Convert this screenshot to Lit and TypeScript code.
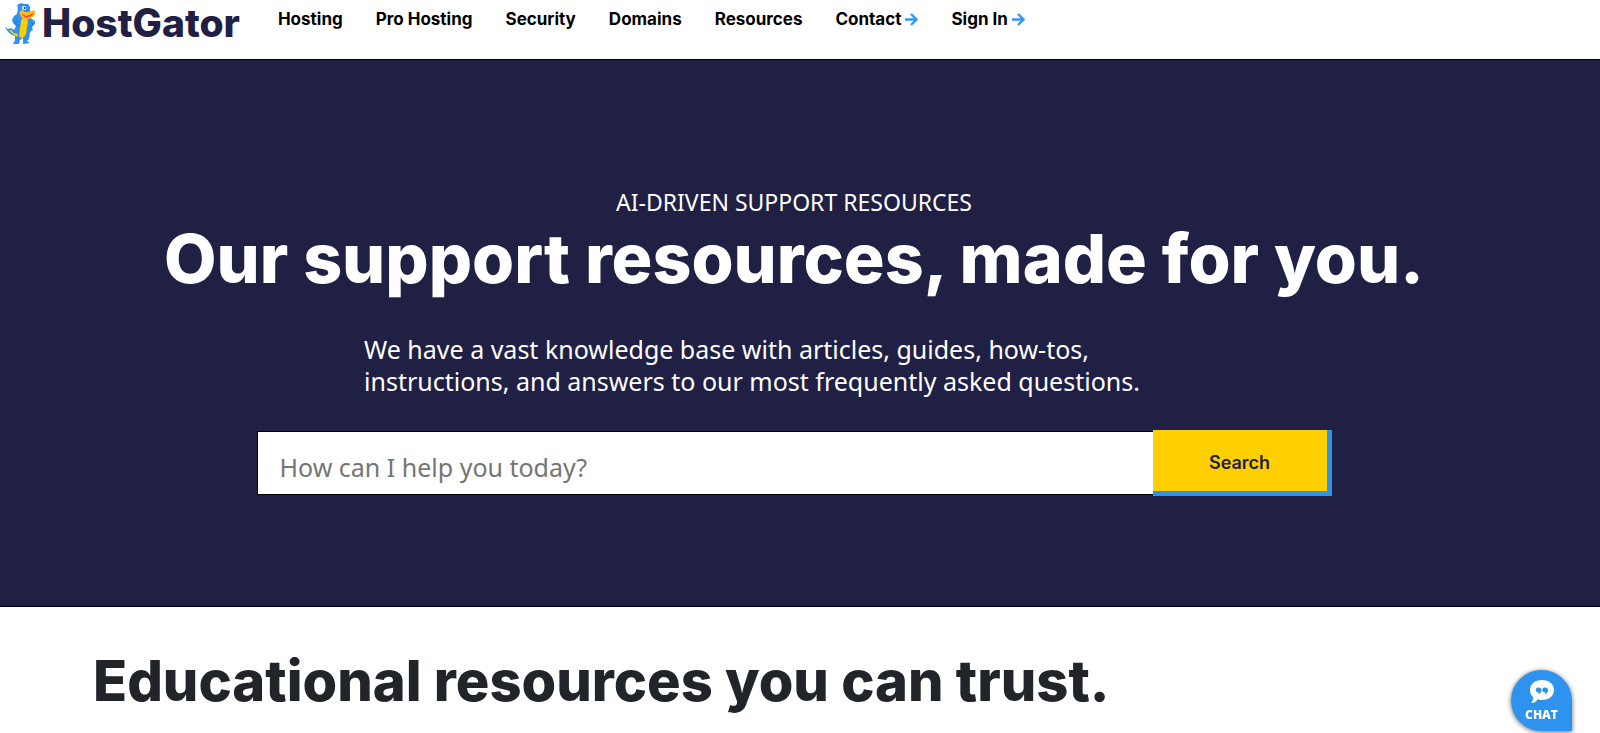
import { LitElement, html, css, svg, nothing } from "lit";
import { customElement } from "lit/decorators.js";

interface NavItem {
  label: string;
  arrow?: boolean;
}

const NAV: NavItem[] = [
  { label: "Hosting" },
  { label: "Pro Hosting" },
  { label: "Security" },
  { label: "Domains" },
  { label: "Resources" },
  { label: "Contact", arrow: true },
  { label: "Sign In", arrow: true },
];

const gator = svg`
  <path fill="#2e93ee" d="M0 24L3 26L6 25L9 27L11 23L8 20L7 17L9 13L12 11L13 5L12 2L16 0L19 1L23 1L25 4L25 8L24 14L27 16L30 18L30 21L27 24L28 27L25 29L24 36L22 38L25 40L18 41L18 35L15 37L14 41L8 41L10 37L10 33L7 32Q3 30 0 24Z"/>
  <path fill="#ffcf00" d="M17 15L22 16L23 19L22 24L21 31L19 34L16 35L14 33L15 25L16 19Z"/>
  <path fill="#ffcf00" d="M4 27L6 27L9 30L13 31L12 34L8 31Q6 30 4 27Z"/>
  <path fill="#ffb91a" d="M14 9L17 7L20 9L24 9L29 7L31 10L28 14L22 17L16 14Z"/>
  <path fill="#f0522d" d="M17 11L21 13L29 10L27 13L22 15L18 13Z"/>
  <path fill="none" stroke="#1b78d2" d="M12 18L10 20L14 22M26 19L28 21L24 24"/>
  <circle cx="19" cy="5" r="2" fill="#fff"/>
  <circle cx="19.500" cy="5" r="1" fill="#1f2044"/>`;

@customElement("app-root")
export class AppRoot extends LitElement {
  static styles = css`
    :host {
      display: block;
      min-height: 100vh;
      background: #fff;
      color: #000;
      font-family: Inter, "Liberation Sans", sans-serif;
      overflow: hidden;
    }
    h1, h2, p { margin: 0; }
    .header {
      display: flex;
      align-items: flex-start;
      gap: 38px;
      height: 59px;
      padding: 0 5px;
    }
    .logo {
      display: flex;
      gap: 6px;
      padding-top: 3px;
      color: #1f2044;
      font-size: 39px;
      line-height: 40px;
      font-weight: 800;
      text-decoration: none;
    }
    .gator { width: 31px; height: 42px; }
    .nav {
      display: flex;
      gap: 33px;
      padding-top: 9px;
    }
    .nav a {
      display: flex;
      align-items: center;
      gap: 4px;
      color: #000;
      font-size: 17px;
      line-height: 20px;
      font-weight: 700;
      text-decoration: none;
      white-space: nowrap;
    }
    .arrow { width: 13px; height: 13px; }
    .hero {
      display: flex;
      flex-direction: column;
      align-items: center;
      padding: 127px 12px 110px 0;
      border-top: 1px solid #000020;
      border-bottom: 1px solid #000020;
      background: #1f2044;
      color: #fff;
    }
    .eyebrow { font-size: 23px; line-height: 30px; font-family: "Noto Sans", sans-serif; }
    .title { font-size: 68px; line-height: 82px; font-weight: 800; white-space: nowrap; }
    .intro {
      box-sizing: border-box;
      width: 860px;
      max-width: 100%;
      padding: 34px 0 0;
      font-family: "Noto Sans", sans-serif;
      font-size: 25px;
      line-height: 32px;
    }
    .search { display: flex; width: 1075px; max-width: 100%; margin-top: 33px; }
    .field {
      flex: 1;
      box-sizing: border-box;
      min-width: 0;
      margin: 1px 0;
      padding: 8px 22px 0;
      border: 1px solid #000;
      border-right: 0;
      border-radius: 0;
      background: #fff;
      font-family: "Noto Sans", sans-serif;
      font-size: 25px;
      outline: none;
    }
    .field::placeholder { color: #757575; opacity: 1; }
    .submit {
      box-sizing: border-box;
      width: 179px;
      height: 66px;
      padding: 4px 0 0;
      border: 0 solid #2e93ee;
      border-width: 0 5px 5px 0;
      background: #ffcf00;
      color: #1f2044;
      font-family: inherit;
      font-size: 18px;
      font-weight: 600;
    }
    .trust { padding: 40px 93px 0; }
    .trust h2 { color: #212529; font-size: 56px; line-height: 68px; font-weight: 800; }
    .chat {
      position: fixed;
      right: 28px;
      bottom: 2px;
      display: flex;
      flex-direction: column;
      align-items: center;
      gap: 4px;
      box-sizing: border-box;
      width: 61px;
      height: 61px;
      padding: 10px 0 0;
      border: 0;
      border-radius: 31px 31px 0 31px;
      background: #2e93ee;
      box-shadow: 0 1px 5px #0009;
      color: #fff;
      font: 800 12px/16px "Open Sans", sans-serif;
    }
    .bubble { width: 24px; height: 23px; }
  `;

  render() {
    return html`
      <header class="header">
        <a class="logo" href="#">
          <svg class="gator" viewBox="0 0 31 42" aria-hidden="true">${gator}</svg>
          <span>HostGator</span>
        </a>
        <nav class="nav">
          ${NAV.map(
            (item) => html`<a href="#">${item.label}${item.arrow
              ? html`<svg class="arrow" viewBox="0 0 13 13" fill="none" stroke="#3296fa" stroke-width="2.4" aria-hidden="true">
                  <path d="M0 6.500H11M6 1L11.500 6.500L6 12" />
                </svg>`
              : nothing}</a>`
          )}
        </nav>
      </header>
      <main>
        <section class="hero">
          <p class="eyebrow">AI-DRIVEN SUPPORT RESOURCES</p>
          <h1 class="title">Our support resources, made for you.</h1>
          <p class="intro">We have a vast knowledge base with articles, guides, how-tos,<br />instructions, and answers to our most frequently asked questions.</p>
          <form class="search" @submit=${(e: Event) => e.preventDefault()}>
            <input class="field" type="text" aria-label="Search support" placeholder="How can I help you today?" />
            <button class="submit" type="submit">Search</button>
          </form>
        </section>
        <section class="trust"><h2>Educational resources you can trust.</h2></section>
      </main>
      <button class="chat" type="button">
        <svg class="bubble" viewBox="0 0 24 23" aria-hidden="true">
          <path fill="#fff" d="M12 0C19 0 24 4 24 10S19 20 12 20C10 20 9 20 8 19C6 22 4 23 1 23C3 21 3 19 3 17C1 15 0 13 0 10C0 4 5 0 12 0Z" />
          <path fill="#2e93ee" d="M8.800 7.500A2.500 2.500 0 1 0 9 12.300Q8.800 13.500 7.500 14.500Q11.500 13.500 11.500 10Q11.500 7.500 8.800 7.500ZM15.300 7.500A2.500 2.500 0 1 0 15.500 12.300Q15.300 13.500 14 14.500Q18 13.500 18 10Q18 7.500 15.300 7.500Z" />
        </svg>
        <span>CHAT</span>
      </button>
    `;
  }
}
